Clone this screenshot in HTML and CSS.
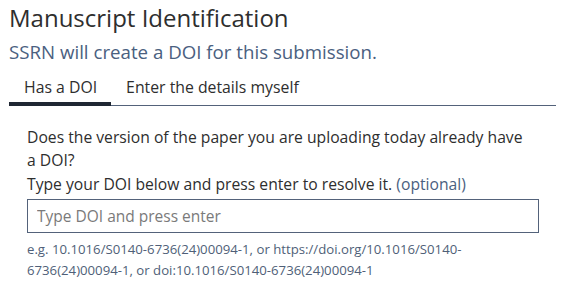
FILE: index.html
```html
<!DOCTYPE html>
<html lang="en">
  <head>
    <meta charset="UTF-8" />
    <meta name="viewport" content="width=device-width, initial-scale=1.0" />
    <title>Manuscript Identification</title>
    <link rel="stylesheet" href="styles.css">
  </head>
  <body>
    <div class="section">
      <h2 class="title">Manuscript Identification</h2>
      <p class="subtitle">SSRN will create a DOI for this submission.</p>

      <div class="tabs">
        <div class="tab active">Has a DOI</div>
        <div class="tab">Enter the details myself</div>
      </div>

      <div class="panel">
        <p class="question">Does the version of the paper you are uploading today already have a DOI?</p>
        <p class="hint">Type your DOI below and press enter to resolve it. <span class="optional">(optional)</span></p>
        <input class="doi-input" type="text" placeholder="Type DOI and press enter" />
        <p class="example">e.g. 10.1016/S0140-6736(24)00094-1, or https://doi.org/10.1016/S0140-6736(24)00094-1, or doi:10.1016/S0140-6736(24)00094-1</p>
      </div>
    </div>
  </body>
</html>
```

FILE: styles.css
```css
body {
  margin: 0;
  background: #fff;
  font-family: "Open Sans", "Liberation Sans", sans-serif;
  color: #2e2e2e;
}
.section {
  width: 547px;
  padding: 3px 0 0 9px;
}
.title {
  margin: 0;
  font-size: 24px;
  font-weight: 400;
  line-height: 30px;
  color: #2e2e2e;
}
.subtitle {
  margin: 7px 0 0;
  font-size: 18.7px;
  line-height: 24px;
  color: #4a6080;
}
.tabs {
  display: flex;
  margin-top: 9px;
  border-bottom: 1px solid #53627a;
}
.tab {
  padding: 4px 14px 5px 15px;
  font-size: 15.8px;
  line-height: 20px;
  color: #2e2e2e;
  border-bottom: 4px solid transparent;
  margin-bottom: -1px;
}
.tab.active {
  border-bottom-color: #1f2733;
}
.panel {
  padding: 20px 17px 0 18px;
}
.question,
.hint {
  margin: 0;
  font-size: 15.7px;
  line-height: 23px;
  color: #2e2e2e;
}
.question {
  max-width: 505px;
}
.hint {
  margin-top: 1px;
}
.optional {
  color: #4a6080;
}
.doi-input {
  display: block;
  box-sizing: border-box;
  width: 512px;
  height: 34px;
  margin-top: 3px;
  padding: 0 9px;
  border: 1px solid #53627a;
  border-radius: 0;
  font-family: inherit;
  font-size: 15.5px;
  color: #2e2e2e;
  outline: none;
}
.doi-input::placeholder {
  color: #7a7a7a;
}
.example {
  margin: 6px 0 0;
  width: 490px;
  font-size: 13.2px;
  line-height: 21px;
  color: #4f5f78;
}
```
